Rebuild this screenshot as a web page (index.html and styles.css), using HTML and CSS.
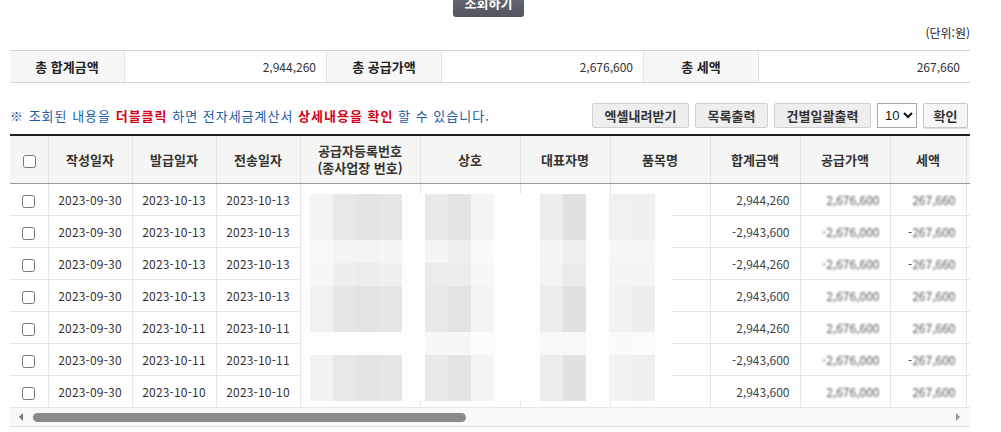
FILE: index.html
```html
<!DOCTYPE html>
<html lang="ko">
<head>
<meta charset="utf-8">
<title>전자세금계산서 조회</title>
<link rel="stylesheet" href="styles.css">
</head>
<body>
<div class="page">
  <div class="topbar"><button class="btn-search">조회하기</button></div>
  <div class="unit">(단위:원)</div>
  <div class="summary">
    <div class="s-label">총 합계금액</div>
    <div class="s-value">2,944,260</div>
    <div class="s-label">총 공급가액</div>
    <div class="s-value">2,676,600</div>
    <div class="s-label">총 세액</div>
    <div class="s-value">267,660</div>
  </div>
  <div class="toolbar">
    <p class="notice">※ 조회된 내용을 <b>더블클릭</b> 하면 전자세금계산서 <b>상세내용을 확인</b> 할 수 있습니다.</p>
    <div class="actions">
      <button class="btn w97">엑셀내려받기</button>
      <button class="btn w73">목록출력</button>
      <button class="btn w97">건별일괄출력</button>
      <select class="sel"><option>10</option><option>20</option><option>50</option></select>
      <button class="btn btn-ok">확인</button>
    </div>
  </div>
  <div class="grid-wrap">
    <div class="grid-scroll">
      <table class="grid">
        <colgroup>
          <col class="c-chk"><col class="c-date"><col class="c-date"><col class="c-date">
          <col class="c-reg"><col class="c-name"><col class="c-ceo"><col class="c-item">
          <col class="c-amt"><col class="c-amt"><col class="c-tax"><col class="c-rest">
        </colgroup>
        <thead>
          <tr>
            <th><input type="checkbox"></th>
            <th>작성일자</th><th>발급일자</th><th>전송일자</th>
            <th>공급자등록번호<br>(종사업장 번호)</th>
            <th>상호</th><th>대표자명</th><th>품목명</th>
            <th>합계금액</th><th>공급가액</th><th>세액</th><th></th>
          </tr>
        </thead>
        <tbody>
          <tr><td><input type="checkbox"></td><td>2023-09-30</td><td>2023-10-13</td><td>2023-10-13</td><td></td><td></td><td></td><td></td><td class="num">2,944,260</td><td class="num"><span class="blur">2,676,600</span></td><td class="num"><span class="blur">267,660</span></td><td></td></tr>
          <tr><td><input type="checkbox"></td><td>2023-09-30</td><td>2023-10-13</td><td>2023-10-13</td><td></td><td></td><td></td><td></td><td class="num">-2,943,600</td><td class="num"><span class="blur">-2,676,000</span></td><td class="num">-<span class="blur">267,600</span></td><td></td></tr>
          <tr><td><input type="checkbox"></td><td>2023-09-30</td><td>2023-10-13</td><td>2023-10-13</td><td></td><td></td><td></td><td></td><td class="num">-2,944,260</td><td class="num"><span class="blur">-2,676,600</span></td><td class="num">-<span class="blur">267,660</span></td><td></td></tr>
          <tr><td><input type="checkbox"></td><td>2023-09-30</td><td>2023-10-13</td><td>2023-10-13</td><td></td><td></td><td></td><td></td><td class="num">2,943,600</td><td class="num"><span class="blur">2,676,000</span></td><td class="num"><span class="blur">267,600</span></td><td></td></tr>
          <tr><td><input type="checkbox"></td><td>2023-09-30</td><td>2023-10-11</td><td>2023-10-11</td><td></td><td></td><td></td><td></td><td class="num">2,944,260</td><td class="num"><span class="blur">2,676,600</span></td><td class="num"><span class="blur">267,660</span></td><td></td></tr>
          <tr><td><input type="checkbox"></td><td>2023-09-30</td><td>2023-10-11</td><td>2023-10-11</td><td></td><td></td><td></td><td></td><td class="num">-2,943,600</td><td class="num"><span class="blur">-2,676,000</span></td><td class="num">-<span class="blur">267,600</span></td><td></td></tr>
          <tr><td><input type="checkbox"></td><td>2023-09-30</td><td>2023-10-10</td><td>2023-10-10</td><td></td><td></td><td></td><td></td><td class="num">2,943,600</td><td class="num"><span class="blur">2,676,000</span></td><td class="num"><span class="blur">267,600</span></td><td></td></tr>
        </tbody>
      </table>
      <svg class="mosaic" width="370" height="207" viewBox="0 0 370 207" aria-hidden="true">
        <rect width="370" height="207" fill="#fdfdfd"/>
        <g>
          <rect x="9" y="0" width="23" height="46" fill="#f4f4f4"/><rect x="32" y="0" width="23" height="46" fill="#e8e8e8"/><rect x="55" y="0" width="23" height="46" fill="#e4e4e4"/><rect x="78" y="0" width="23" height="46" fill="#e6e6e6"/>
          <rect x="124" y="0" width="23" height="46" fill="#e9e9e9"/><rect x="147" y="0" width="23" height="46" fill="#e4e4e4"/><rect x="170" y="0" width="23" height="46" fill="#f5f5f5"/>
          <rect x="239" y="0" width="23" height="46" fill="#ececec"/><rect x="262" y="0" width="23" height="46" fill="#e1e1e1"/>
          <rect x="308" y="0" width="23" height="46" fill="#f1f1f1"/><rect x="331" y="0" width="23" height="46" fill="#f0f0f0"/>
        </g>
        <g>
          <rect x="9" y="46" width="23" height="23" fill="#f9f9f9"/><rect x="32" y="46" width="23" height="23" fill="#f4f4f4"/><rect x="55" y="46" width="23" height="23" fill="#f3f3f3"/><rect x="78" y="46" width="23" height="23" fill="#f5f5f5"/>
          <rect x="124" y="46" width="23" height="23" fill="#f4f4f4"/><rect x="147" y="46" width="23" height="23" fill="#efefef"/><rect x="170" y="46" width="23" height="23" fill="#fafafa"/>
          <rect x="239" y="46" width="23" height="23" fill="#f5f5f5"/><rect x="262" y="46" width="23" height="23" fill="#efefef"/>
          <rect x="308" y="46" width="23" height="23" fill="#f7f7f7"/><rect x="331" y="46" width="23" height="23" fill="#f6f6f6"/>
        </g>
        <g>
          <rect x="9" y="69" width="23" height="23" fill="#f7f7f7"/><rect x="32" y="69" width="23" height="23" fill="#eeeeee"/><rect x="55" y="69" width="23" height="23" fill="#ececec"/><rect x="78" y="69" width="23" height="23" fill="#f0f0f0"/>
          <rect x="124" y="69" width="23" height="23" fill="#ececec"/><rect x="147" y="69" width="23" height="23" fill="#ececec"/><rect x="170" y="69" width="23" height="23" fill="#f7f7f7"/>
          <rect x="239" y="69" width="23" height="23" fill="#f3f3f3"/><rect x="262" y="69" width="23" height="23" fill="#ebebeb"/>
          <rect x="308" y="69" width="23" height="23" fill="#f5f5f5"/><rect x="331" y="69" width="23" height="23" fill="#f5f5f5"/>
        </g>
        <g>
          <rect x="9" y="92" width="23" height="46" fill="#f1f1f1"/><rect x="32" y="92" width="23" height="46" fill="#e6e6e6"/><rect x="55" y="92" width="23" height="46" fill="#e3e3e3"/><rect x="78" y="92" width="23" height="46" fill="#e6e6e6"/>
          <rect x="124" y="92" width="23" height="46" fill="#e9e9e9"/><rect x="147" y="92" width="23" height="46" fill="#e3e3e3"/><rect x="170" y="92" width="23" height="46" fill="#f4f4f4"/>
          <rect x="239" y="92" width="23" height="46" fill="#ececec"/><rect x="262" y="92" width="23" height="46" fill="#e1e1e1"/>
          <rect x="308" y="92" width="23" height="46" fill="#f2f2f2"/><rect x="331" y="92" width="23" height="46" fill="#eeeeee"/>
        </g>
        <g>
          <rect x="124" y="138" width="23" height="23" fill="#f7f7f7"/><rect x="147" y="138" width="23" height="23" fill="#f7f7f7"/><rect x="170" y="138" width="23" height="23" fill="#fcfcfc"/>
          <rect x="239" y="138" width="23" height="23" fill="#f8f8f8"/><rect x="262" y="138" width="23" height="23" fill="#f8f8f8"/>
          <rect x="308" y="138" width="23" height="23" fill="#fafafa"/><rect x="331" y="138" width="23" height="23" fill="#fbfbfb"/>
        </g>
        <g>
          <rect x="9" y="161" width="23" height="46" fill="#f2f2f2"/><rect x="32" y="161" width="23" height="46" fill="#e8e8e8"/><rect x="55" y="161" width="23" height="46" fill="#e4e4e4"/><rect x="78" y="161" width="23" height="46" fill="#e6e6e6"/>
          <rect x="124" y="161" width="23" height="46" fill="#e9e9e9"/><rect x="147" y="161" width="23" height="46" fill="#e4e4e4"/><rect x="170" y="161" width="23" height="46" fill="#f5f5f5"/>
          <rect x="239" y="161" width="23" height="46" fill="#ececec"/><rect x="262" y="161" width="23" height="46" fill="#e2e2e2"/>
          <rect x="308" y="161" width="23" height="46" fill="#f2f2f2"/><rect x="331" y="161" width="23" height="46" fill="#efefef"/>
        </g>
      </svg>
    </div>
    <div class="hscroll">
      <span class="arr arr-l"></span>
      <div class="track"><div class="thumb"></div></div>
      <span class="arr arr-r"></span>
    </div>
  </div>
</div>
</body>
</html>
```

FILE: styles.css
```css
* { box-sizing: border-box; }
html, body { margin: 0; padding: 0; background: #fff; }
body {
  font-family: "Noto Sans CJK KR", "Noto Sans", "Liberation Sans", sans-serif;
  font-size: 12px;
  color: #333;
  overflow: hidden;
}
.page { width: 960px; margin-left: 10px; }

.topbar { display: flow-root; height: 17px; padding-left: 443px; }
.btn-search {
  display: block;
  width: 71px; height: 29px;
  margin-top: -12px;
  border: 0;
  border-radius: 0 0 3px 3px;
  background: linear-gradient(#6e7179, #52555d);
  color: #fff;
  font-family: inherit;
  font-size: 13px;
  font-weight: bold;
  padding: 0;
  line-height: 29px;
}

.unit { margin-top: 8px; height: 16px; line-height: 16px; text-align: right; font-size: 12px; color: #222; }

.summary {
  margin-top: 9px;
  display: grid;
  grid-template-columns: 114px 202px 115px 202px 115px 212px;
  border-top: 1px solid #d4d4d4;
  border-bottom: 1px solid #d4d4d4;
  height: 33px;
}
.summary > div { display: flex; align-items: center; border-left: 1px solid #e2e2e2; }
.summary > div:first-child { border-left: 0; }
.s-label { justify-content: center; background: #f7f7f7; font-weight: bold; font-size: 13px; color: #222; }
.s-value { justify-content: flex-end; padding-right: 10px; font-size: 12px; color: #333; }

.toolbar { margin-top: 20px; height: 25px; display: flex; justify-content: space-between; align-items: center; }
.notice { margin: 0; font-size: 13px; color: #1b5ea3; letter-spacing: 1px; }
.notice b { color: #d4001a; }
.actions { display: flex; gap: 6px; align-items: center; margin-right: 2px; }
.btn {
  height: 25px;
  padding: 0;
  border: 1px solid #d0d0d0;
  border-radius: 2px;
  background: #eeeeee;
  color: #333;
  font-family: inherit;
  font-size: 13px;
  font-weight: bold;
}
.w97 { width: 97px; }
.w73 { width: 73px; }
.btn-ok { width: 45px; background: #f6f6f6; border-color: #c8c8c8; box-shadow: 0 1px 0 #ddd; }
.sel {
  width: 40px; height: 25px;
  border: 1px solid #a9a9a9;
  border-radius: 0;
  background: #fff;
  font-family: "Liberation Sans", Arial, sans-serif;
  font-size: 13px;
  color: #111;
  padding: 0 0 0 3px;
}

.grid-wrap { margin-top: 6px; }
.grid-scroll { position: relative; width: 960px; overflow: hidden; }
.grid { width: 1900px; table-layout: fixed; border-collapse: collapse; border-top: 2px solid #1e1e1e; }
.c-chk { width: 38px; }
.c-date { width: 84px; }
.c-reg { width: 120px; }
.c-name { width: 100px; }
.c-ceo { width: 90px; }
.c-item { width: 100px; }
.c-amt { width: 90px; }
.c-tax { width: 76px; }
.c-rest { width: 1144px; }
.grid th {
  height: 48px;
  background: #f5f5f3;
  border-right: 1px solid #e4e4e4;
  border-bottom: 1px solid #9a9a9a;
  font-size: 13px;
  font-weight: bold;
  color: #333;
  line-height: 17px;
  padding: 0;
  text-align: center;
}
.grid td {
  height: 32px;
  border-right: 1px solid #e6e6e6;
  border-bottom: 1px solid #e6e6e6;
  text-align: center;
  font-size: 12px;
  color: #333;
  padding: 0;
  letter-spacing: 0.2px;
}
.grid td.num { text-align: right; padding-right: 10px; color: #444; letter-spacing: 0; }
.blur { filter: blur(0.8px); color: #555; }
.grid input[type="checkbox"] { width: 13px; height: 13px; margin: 0; vertical-align: middle; }
.grid th:first-child input { margin-left: 1px; }

.mosaic { position: absolute; left: 291px; top: 60px; display: block; }

.hscroll {
  height: 19px;
  display: flex;
  align-items: center;
  background: #f8f8f8;
  border-bottom: 1px solid #dcdcdc;
  padding-top: 1px;
}
.arr { width: 0; height: 0; border-top: 4px solid transparent; border-bottom: 4px solid transparent; }
.arr-l { margin-left: 9px; border-right: 4px solid #777; }
.arr-r { margin-right: 10px; border-left: 4px solid #999; }
.track { flex: 1; padding: 0 10px 0 10px; }
.thumb { width: 433px; height: 9px; border-radius: 5px; background: #8a8a8a; }
```
